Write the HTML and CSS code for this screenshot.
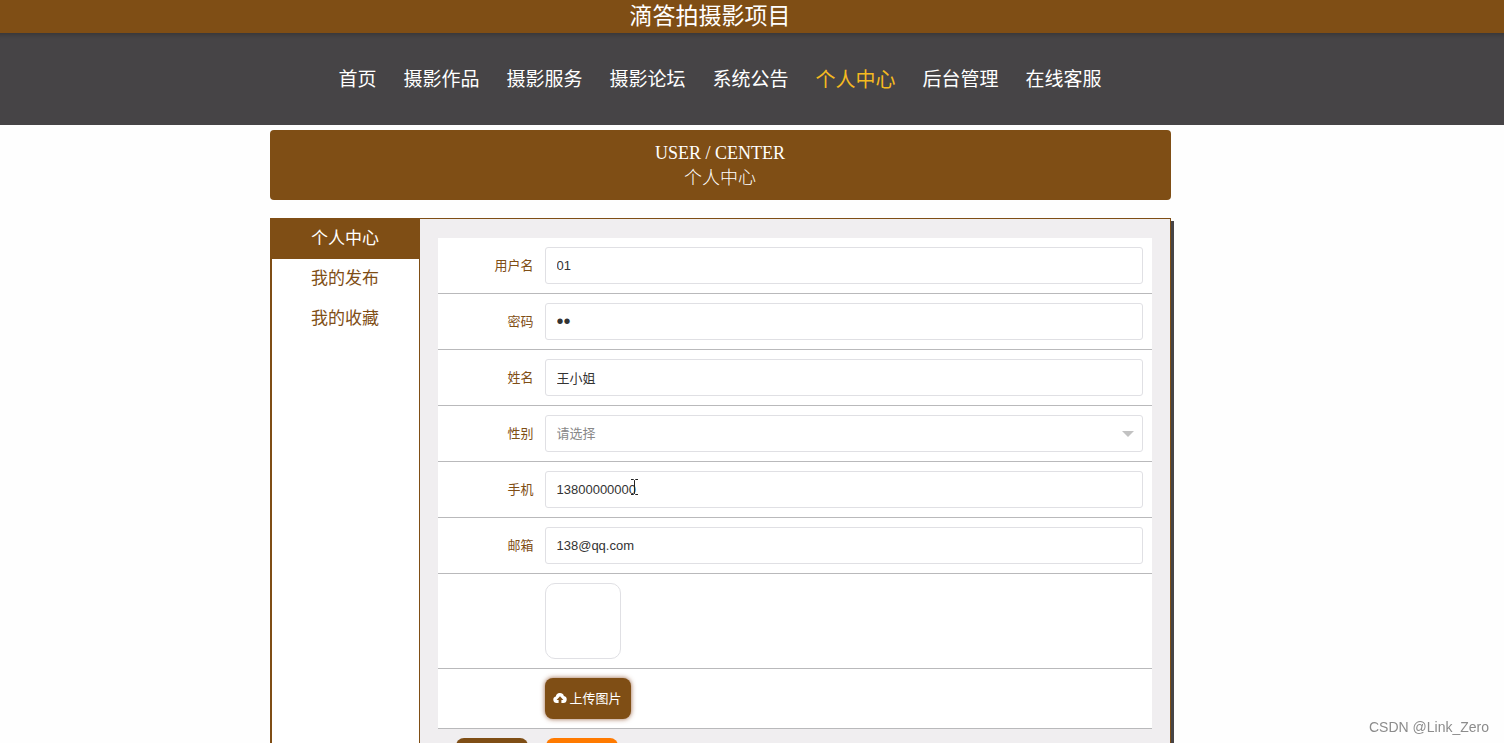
FILE: index.html
```
<!DOCTYPE html>
<html lang="zh-CN">
<head>
  <meta charset="UTF-8">
  <title>个人中心</title>
  <meta name="viewport" content="width=device-width, initial-scale=1.0">
  <link rel="stylesheet" href="styles.css">
</head>
<body>
  <header>
    <h1 class="site-title">滴答拍摄影项目</h1>
    <nav class="navs">
      <a href="#home">首页</a>
      <a href="#works">摄影作品</a>
      <a href="#service">摄影服务</a>
      <a href="#forum">摄影论坛</a>
      <a href="#news">系统公告</a>
      <a href="#center" class="active">个人中心</a>
      <a href="#admin">后台管理</a>
      <a href="#chat">在线客服</a>
    </nav>
  </header>

  <main>
    <div class="banner">
      <p>USER / CENTER</p>
      <h2>个人中心</h2>
    </div>

    <div class="center">
      <aside class="menu">
        <a href="#center" class="active">个人中心</a>
        <a href="#posts">我的发布</a>
        <a href="#favs">我的收藏</a>
      </aside>

      <form class="content">
        <div class="row">
          <label for="username">用户名</label>
          <input type="text" id="username" value="01">
        </div>
        <div class="row">
          <label for="password">密码</label>
          <input type="password" id="password" value="01">
        </div>
        <div class="row">
          <label for="name">姓名</label>
          <input type="text" id="name" value="王小姐">
        </div>
        <div class="row">
          <label for="gender">性别</label>
          <div class="select-box">
            <select id="gender">
              <option value="">请选择</option>
              <option>男</option>
              <option>女</option>
            </select>
            <span class="arrow"></span>
          </div>
        </div>
        <div class="row">
          <label for="phone">手机</label>
          <div class="phone-box">
            <input type="text" id="phone" value="13800000000">
            <svg class="cursor" width="9" height="16" viewBox="0 0 9 16" fill="none" stroke="#222">
              <path d="M1 .5h2.5l1 1 1-1H8M4.500 1.500v13M1 15.500h2.500l1-1 1 1H8"/>
            </svg>
          </div>
        </div>
        <div class="row">
          <label for="email">邮箱</label>
          <input type="text" id="email" value="138@qq.com">
        </div>
        <div class="row">
          <div class="avatar"></div>
        </div>
        <div class="row">
          <button type="button" class="upload">
            <svg width="14" height="12" viewBox="0 0 14 12">
              <path fill="#fff" fill-rule="evenodd" d="M3.500 11A3.300 3.300 0 0 1 2.800 4.500 4.200 4.200 0 0 1 10.900 3.900 3.600 3.600 0 0 1 10.400 11H8.400V8h2L7 4.300 3.600 8h2v3z"/>
            </svg>
            <span>上传图片</span>
          </button>
        </div>
        <div class="actions">
          <button type="submit" class="btn">更新信息</button>
          <button type="button" class="btn btn-exit">退出登录</button>
        </div>
      </form>
    </div>
  </main>

  <div class="watermark">CSDN @Link_Zero</div>
</body>
</html>
```

FILE: styles.css
```
:root {
  --main: #7f4e15;
  --dark: #464446;
  --panel: #f0eef0;
  --line: #b9b9bb;
  --field: #e0e0e4;
  --orange: #ff7a00;
}

* {
  box-sizing: border-box;
}

body {
  margin: 0;
  height: 100vh;
  overflow-y: auto;
  scrollbar-width: none;
  background: #fefefe;
  font-family: "Liberation Sans", "Noto Sans CJK SC", sans-serif;
}

h1, h2, p {
  margin: 0;
  font-weight: normal;
}

a {
  text-decoration: none;
}

.site-title {
  height: 33px;
  padding-right: 84px;
  background: var(--main);
  color: #fff;
  font-size: 23px;
  line-height: 33px;
  text-align: center;
}

.navs {
  display: flex;
  justify-content: center;
  align-items: center;
  gap: 27px;
  height: 92px;
  padding: 2px 64px 0 0;
  background: var(--dark);
  box-shadow: inset 0 6px 4px -4px rgba(0, 0, 0, 0.2);
}

.navs a {
  color: #fff;
  font-size: 19px;
  line-height: 28px;
  white-space: nowrap;
}

.navs .active {
  color: #f5ba20;
  font-size: 20px;
}

main {
  padding: 5px 64px 40px 0;
}

.banner, .center {
  max-width: 901px;
  margin: 0 auto;
}

.banner {
  padding: 11px 0 9px;
  border-radius: 4px;
  background: var(--main);
  color: #fff;
  font-family: "Liberation Serif", "Noto Sans CJK SC", serif;
  font-size: 18px;
  line-height: 25px;
  text-align: center;
}

.banner h2 {
  font-size: 18px;
  font-weight: 300;
}

.center {
  display: flex;
  margin-top: 18px;
  border: 1px solid var(--main);
  border-left-width: 2px;
  background: #fff;
  box-shadow: 3px 3px 0 var(--dark);
}

.menu {
  width: 148px;
  flex-shrink: 0;
  border-right: 1px solid var(--main);
}

.menu a {
  display: block;
  height: 40px;
  color: var(--main);
  font-size: 17px;
  line-height: 40px;
  text-align: center;
}

.menu .active {
  background: var(--main);
  color: #fff;
}

.content {
  flex: 1;
  min-width: 0;
  padding: 19px 18px 18px;
  background: var(--panel);
}

.row {
  display: flex;
  align-items: center;
  padding: 9px 9px 9px 107px;
  border-bottom: 1px solid var(--line);
  background: #fff;
}

.row label {
  width: 96px;
  margin: 0 11px 0 -107px;
  padding-bottom: 2px;
  flex-shrink: 0;
  color: var(--main);
  font-size: 13px;
  text-align: right;
}

.row input, .row select {
  width: 100%;
  height: 37px;
  padding: 0 11px;
  border: 1px solid var(--field);
  border-radius: 3px;
  background: #fff;
  color: #333;
  font-family: inherit;
  font-size: 13px;
}

.row input[type="password"] {
  font-size: 20px;
}

.row select {
  appearance: none;
  color: #888;
}

.row input:focus, .row select:focus {
  outline: none;
  border-color: var(--main);
}

.select-box, .phone-box {
  display: flex;
  position: relative;
  flex: 1;
}

.arrow {
  position: absolute;
  top: 16px;
  right: 9px;
  border: 6px solid transparent;
  border-top-color: #c2c2c2;
  border-bottom: 0;
  pointer-events: none;
}

.cursor {
  position: absolute;
  top: 8px;
  left: 85px;
  pointer-events: none;
}

.avatar {
  width: 76px;
  height: 76px;
  border: 1px solid var(--field);
  border-radius: 10px;
}

.upload {
  display: flex;
  justify-content: center;
  align-items: center;
  gap: 2px;
  width: 86px;
  height: 41px;
  padding: 0 0 2px;
  border: 0;
  border-radius: 8px;
  background: var(--main);
  box-shadow: 0 0 5px rgba(127, 60, 20, 0.8);
  color: #fff;
  font-family: inherit;
  font-size: 13px;
  cursor: pointer;
}

.actions {
  display: flex;
  gap: 18px;
  padding: 9px 18px;
}

.btn {
  width: 72px;
  height: 40px;
  padding: 0;
  border: 0;
  border-radius: 8px;
  background: var(--main);
  color: #fff;
  font-family: inherit;
  font-size: 13px;
  cursor: pointer;
}

.btn-exit {
  background: var(--orange);
}

.watermark {
  position: fixed;
  right: 15px;
  bottom: 6px;
  color: #8c8c8c;
  font-size: 14px;
  line-height: 20px;
}
```
